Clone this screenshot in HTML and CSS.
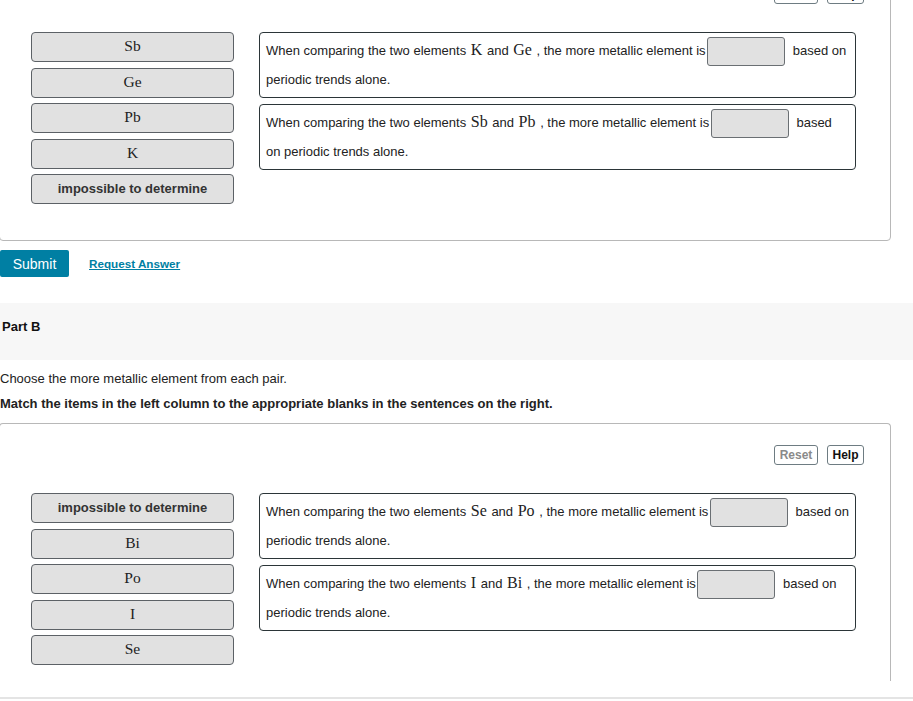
FILE: index.html
```html
<!DOCTYPE html>
<html lang="en">
<head>
  <meta charset="utf-8" />
  <title>Metallic Character</title>
  <meta name="viewport" content="width=device-width, initial-scale=1" />
  <link rel="stylesheet" href="styles.css">
</head>
<body>
  <section class="card card-first">
    <div class="toolbar">
      <button class="tool-btn reset">Reset</button>
      <button class="tool-btn help">Help</button>
    </div>
    <div class="match">
      <ul class="items">
        <li class="item el">Sb</li>
        <li class="item el">Ge</li>
        <li class="item el">Pb</li>
        <li class="item el">K</li>
        <li class="item">impossible to determine</li>
      </ul>
      <div class="sentences">
        <p class="sentence">When comparing the two elements <span class="el">K</span> and <span class="el">Ge</span> , the more metallic element is <span class="blank"></span> based on<br>periodic trends alone.</p>
        <p class="sentence">When comparing the two elements <span class="el">Sb</span> and <span class="el">Pb</span> , the more metallic element is <span class="blank"></span> based<br>on periodic trends alone.</p>
      </div>
    </div>
  </section>

  <div class="actions">
    <button class="submit">Submit</button>
    <a href="#" class="request">Request Answer</a>
  </div>

  <h2 class="part">Part B</h2>

  <p class="prompt">Choose the more metallic element from each pair.</p>
  <p class="instructions">Match the items in the left column to the appropriate blanks in the sentences on the right.</p>

  <section class="card card-last">
    <div class="toolbar">
      <button class="tool-btn reset">Reset</button>
      <button class="tool-btn help">Help</button>
    </div>
    <div class="match">
      <ul class="items">
        <li class="item">impossible to determine</li>
        <li class="item el">Bi</li>
        <li class="item el">Po</li>
        <li class="item el">I</li>
        <li class="item el">Se</li>
      </ul>
      <div class="sentences">
        <p class="sentence">When comparing the two elements <span class="el">Se</span> and <span class="el">Po</span> , the more metallic element is <span class="blank"></span> based on<br>periodic trends alone.</p>
        <p class="sentence">When comparing the two elements <span class="el">I</span> and <span class="el">Bi</span> , the more metallic element is <span class="blank"></span> based on<br>periodic trends alone.</p>
      </div>
    </div>
  </section>

  <div class="footer-line"></div>
</body>
</html>
```

FILE: styles.css
```css
:root {
  --teal: #007fa3;
  --item-bg: #e1e1e1;
  --item-border: #5c6166;
  --card-border: #b8b8b8;
  --text: #222;
  --band: #f7f7f7;
}

* { box-sizing: border-box; margin: 0; padding: 0; }

body {
  font-family: "Liberation Sans", Arial, Helvetica, sans-serif;
  font-size: 13px;
  color: var(--text);
  background: #fff;
  width: 913px;
  overflow: hidden;
}

.card {
  width: 892px;
  margin-left: -1px;
  border: 1px solid var(--card-border);
  border-radius: 4px;
  padding: 21px 26px 36px 31px;
}

.card-first {
  margin-top: -38px;
}

.card-last {
  height: 258px;
  border-bottom: none;
  border-radius: 4px 4px 0 0;
}

.toolbar {
  display: flex;
  justify-content: flex-end;
  gap: 9px;
  height: 20px;
  margin-bottom: 28px;
}

.tool-btn {
  font-family: inherit;
  font-size: 12px;
  font-weight: bold;
  background: #fff;
  border: 1px solid #6e7c82;
  border-radius: 3px;
  padding: 0 3px;
  height: 20px;
  line-height: 18px;
}

.tool-btn.reset {
  width: 44px;
  color: #8a8a8a;
}

.tool-btn.help {
  width: 37px;
  color: #111;
}

.match {
  display: flex;
  gap: 25px;
}

.items {
  list-style: none;
  width: 203px;
  display: flex;
  flex-direction: column;
  gap: 5.5px;
}

.item {
  height: 30px;
  background: var(--item-bg);
  border: 1px solid var(--item-border);
  border-radius: 4px;
  display: flex;
  align-items: center;
  justify-content: center;
  font-weight: bold;
  font-size: 13px;
  color: #333;
  padding-bottom: 2px;
}

.item.el {
  font-family: "Liberation Serif", "Times New Roman", serif;
  font-weight: normal;
  font-size: 15.5px;
  color: #222;
}

.sentences {
  width: 597px;
  display: flex;
  flex-direction: column;
  gap: 6px;
}

.sentence {
  height: 66px;
  border: 1.5px solid #2b3538;
  border-radius: 4px;
  padding: 4px 4px 4px 6px;
  line-height: 28px;
  font-size: 13px;
  color: #222;
}

.sentence .el {
  font-family: "Liberation Serif", "Times New Roman", serif;
  font-size: 16px;
  line-height: 1;
  padding: 0 1px;
}

.blank {
  display: inline-block;
  width: 78px;
  height: 29px;
  background: var(--item-bg);
  border: 1px solid #6a6f73;
  border-radius: 3px;
  vertical-align: middle;
  margin: 0 4px 0 -2px;
}

.actions {
  display: flex;
  align-items: center;
  gap: 20px;
  margin-top: 9px;
}

.submit {
  font-family: inherit;
  font-size: 14px;
  color: #fff;
  background: var(--teal);
  border: none;
  border-radius: 2px;
  width: 69px;
  height: 27px;
}

.request {
  font-size: 11.7px;
  font-weight: bold;
  color: var(--teal);
  text-decoration: underline;
}

.part {
  margin-top: 26px;
  height: 57px;
  background: var(--band);
  font-size: 13px;
  font-weight: bold;
  padding: 16px 0 0 2px;
  color: #111;
}

.prompt {
  margin-top: 12px;
  line-height: 14px;
}

.instructions {
  margin-top: 11px;
  line-height: 14px;
  font-weight: bold;
  font-size: 13px;
  margin-bottom: 12px;
}

.footer-line {
  margin-top: 16px;
  height: 2px;
  background: #e4e4e4;
}
```
